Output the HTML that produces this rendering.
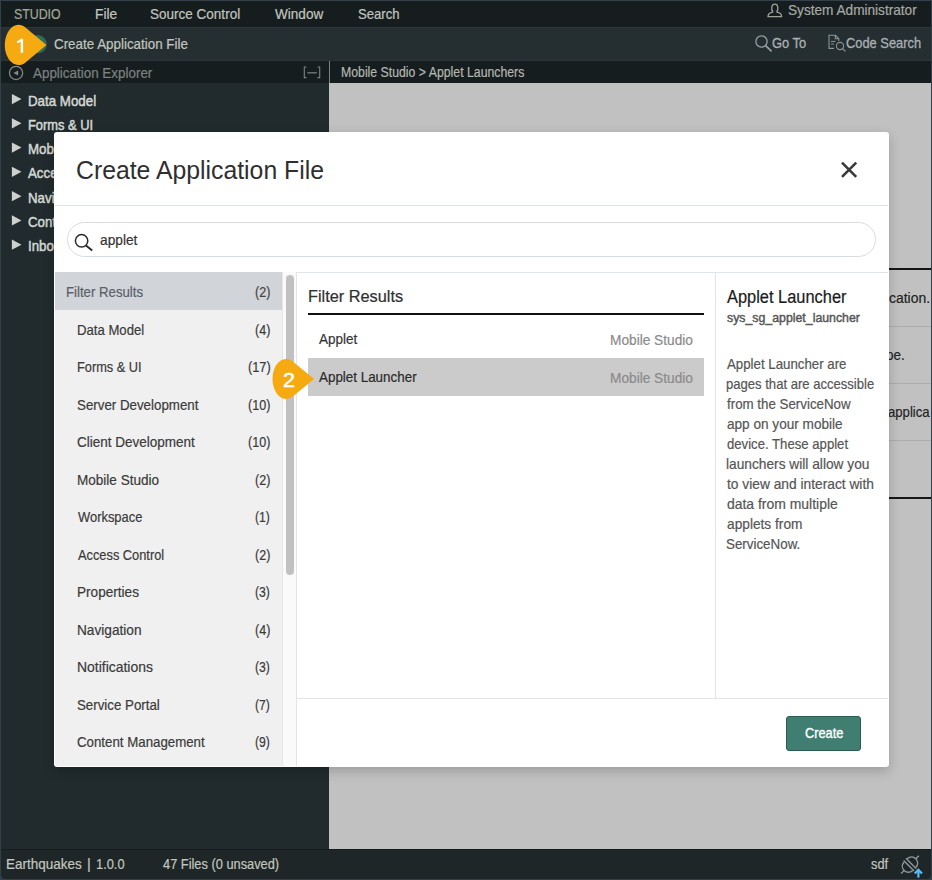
<!DOCTYPE html>
<html><head><meta charset="utf-8">
<style>
*{box-sizing:border-box;margin:0;padding:0}
html,body{width:932px;height:880px;overflow:hidden;background:#33404a;font-family:"Liberation Sans",sans-serif}
.a{position:absolute}
.t{position:absolute;white-space:nowrap;line-height:1;transform-origin:0 0}
svg{position:absolute;left:0;top:0;overflow:visible}
</style></head><body>
<!-- menu bar -->
<div class="a" style="left:1px;top:1px;width:930px;height:26px;background:#161d1f"></div>
<div class="a" style="left:1px;top:27px;width:930px;height:1px;background:#2e363c"></div>
<!-- toolbar -->
<div class="a" style="left:1px;top:28px;width:930px;height:32px;background:#252f31"></div>
<div class="a" style="left:1px;top:60px;width:930px;height:1px;background:#2c3438"></div>
<!-- explorer header + breadcrumb -->
<div class="a" style="left:1px;top:61px;width:930px;height:22px;background:#161d1f"></div>
<!-- sidebar -->
<div class="a" style="left:1px;top:83px;width:328px;height:766px;background:#212b2d"></div>
<div class="a" style="left:329px;top:61px;width:1px;height:22px;background:#7d8385"></div>
<!-- content -->
<div class="a" style="left:329px;top:83px;width:602px;height:766px;background:#c1c1c1"></div>
<div class="a" style="left:330px;top:268px;width:601px;height:2px;background:#151515"></div>
<div class="a" style="left:330px;top:326px;width:601px;height:1px;background:#adadad"></div>
<div class="a" style="left:330px;top:383px;width:601px;height:1px;background:#adadad"></div>
<div class="a" style="left:330px;top:440px;width:601px;height:1px;background:#adadad"></div>
<div class="a" style="left:330px;top:497px;width:601px;height:2px;background:#151515"></div>
<!-- status bar -->
<div class="a" style="left:1px;top:849px;width:930px;height:30px;background:#1e2628;border-bottom-left-radius:4px;border-bottom-right-radius:4px"></div>
<div class="a" style="left:1px;top:849px;width:930px;height:1px;background:#161c1e"></div>

<svg width="932" height="880">
  <!-- user icon -->
  <path d="M772.6,11.2 C771.2,9.6 771.2,4.2 774.8,4.2 C778.4,4.2 778.4,9.6 777,11.2 L777,12.2 C780.2,12.8 781.6,14.4 781.6,16.6 L768,16.6 C768,14.4 769.4,12.8 772.6,12.2 Z" fill="none" stroke="#9ea399" stroke-width="1.3"/>
  <!-- go to search icon -->
  <circle cx="761.5" cy="41.5" r="5.6" fill="none" stroke="#9a9fa0" stroke-width="1.3"/>
  <line x1="765.6" y1="45.6" x2="771.6" y2="51.4" stroke="#9a9fa0" stroke-width="1.7"/>
  <!-- code search icon -->
  <path d="M835.3,35.2 L829,35.2 L829,48.4 L834,48.4 M835.3,35.2 L838.8,38.8 L838.8,41 M835.3,35.2 L835.3,38.8 L838.8,38.8" fill="none" stroke="#8e9394" stroke-width="1.1"/>
  <line x1="831" y1="41.4" x2="835.5" y2="41.4" stroke="#8e9394" stroke-width="1"/>
  <line x1="831" y1="44" x2="834" y2="44" stroke="#8e9394" stroke-width="1"/>
  <circle cx="840" cy="46" r="3.6" fill="none" stroke="#8e9394" stroke-width="1.1"/>
  <line x1="842.6" y1="48.6" x2="845.4" y2="51.4" stroke="#8e9394" stroke-width="1.3"/>
  <!-- green app icon -->
  <circle cx="37.7" cy="44.2" r="9.1" fill="#2f6a5a"/>
  <!-- explorer circle icon -->
  <circle cx="16.05" cy="72.95" r="6.6" fill="none" stroke="#868b88" stroke-width="1.2"/>
  <path d="M13.4,73 L18.2,70.4 L18.2,75.6 Z" fill="#868b88"/>
  <!-- [-] icon -->
  <path d="M306.5,67 L304.3,67 L304.3,77.6 L306.5,77.6 M317.5,67 L319.7,67 L319.7,77.6 L317.5,77.6" fill="none" stroke="#808583" stroke-width="1.1"/>
  <line x1="307.4" y1="72.8" x2="316.8" y2="72.8" stroke="#808583" stroke-width="1.2"/>
  <!-- tree triangles -->
  <g fill="#cdd0cc">
    <path d="M11.9,93.90 L21.5,99.05 L11.9,104.20 Z"/>
    <path d="M11.9,118.17 L21.5,123.32 L11.9,128.47 Z"/>
    <path d="M11.9,142.44 L21.5,147.59 L11.9,152.74 Z"/>
    <path d="M11.9,166.71 L21.5,171.86 L11.9,177.01 Z"/>
    <path d="M11.9,190.98 L21.5,196.13 L11.9,201.28 Z"/>
    <path d="M11.9,215.25 L21.5,220.40 L11.9,225.55 Z"/>
    <path d="M11.9,239.52 L21.5,244.67 L11.9,249.82 Z"/>
  </g>
  <!-- plug icon -->
  <g transform="translate(910,864.6) rotate(-45)" fill="none" stroke="#8f969c" stroke-width="1.35">
    <path d="M2.2,-6 C6,-6 8.2,-3.3 8.2,0 C8.2,3.3 6,6 2.2,6"/>
    <path d="M-2.2,-6 C-6,-6 -8.2,-3.3 -8.2,0 C-8.2,3.3 -6,6 -2.2,6"/>
    <line x1="1.6" y1="-7.4" x2="1.6" y2="7.4"/>
    <line x1="-1.6" y1="-7.4" x2="-1.6" y2="7.4"/>
    <line x1="8.2" y1="0" x2="12.6" y2="0"/>
    <line x1="-8.2" y1="0" x2="-12.6" y2="0"/>
  </g>
  <path d="M914.8,873.6 L918.4,869.9 L922,873.6" fill="none" stroke="#5cb9f6" stroke-width="2.2"/>
  <line x1="918.4" y1="870.5" x2="918.4" y2="877.6" stroke="#5cb9f6" stroke-width="2.2"/>
</svg>
<div class=t style="left:13.77px;top:6.90px;font-size:14.8px;-webkit-text-stroke:0.20px #a3a898;color:#a3a898;transform:scaleX(0.8345)">STUDIO</div>
<div class=t style="left:94.57px;top:6.90px;font-size:14.8px;-webkit-text-stroke:0.20px #c3c6bf;color:#c3c6bf;transform:scaleX(0.9273)">File</div>
<div class=t style="left:150.49px;top:6.90px;font-size:14.8px;-webkit-text-stroke:0.20px #c3c6bf;color:#c3c6bf;transform:scaleX(0.9134)">Source Control</div>
<div class=t style="left:275.20px;top:6.90px;font-size:14.8px;-webkit-text-stroke:0.20px #c3c6bf;color:#c3c6bf;transform:scaleX(0.9170)">Window</div>
<div class=t style="left:358.41px;top:6.90px;font-size:14.8px;-webkit-text-stroke:0.20px #c3c6bf;color:#c3c6bf;transform:scaleX(0.8867)">Search</div>
<div class=t style="left:788.46px;top:2.80px;font-size:14.5px;-webkit-text-stroke:0.20px #a6aaa3;color:#a6aaa3;transform:scaleX(0.9397)">System Administrator</div>
<div class=t style="left:53.66px;top:36.90px;font-size:14.2px;-webkit-text-stroke:0.20px #c3c6bf;color:#c3c6bf;transform:scaleX(0.9433)">Create Application File</div>
<div class=t style="left:772.11px;top:36.00px;font-size:14.5px;-webkit-text-stroke:0.30px #aab0b2;color:#aab0b2;transform:scaleX(0.8892)">Go To</div>
<div class=t style="left:845.81px;top:36.00px;font-size:14.5px;-webkit-text-stroke:0.30px #aab0b2;color:#aab0b2;transform:scaleX(0.8867)">Code Search</div>
<div class=t style="left:32.50px;top:65.70px;font-size:14px;-webkit-text-stroke:0.20px #7b827f;color:#7b827f;transform:scaleX(0.9584)">Application Explorer</div>
<div class=t style="left:340.81px;top:65.50px;font-size:13.8px;-webkit-text-stroke:0.20px #b3b7ae;color:#b3b7ae;transform:scaleX(0.8902)">Mobile Studio &gt; Applet Launchers</div>
<div class=t style="left:27.50px;top:93.50px;font-size:14.8px;-webkit-text-stroke:0.50px #d5d8d4;color:#d5d8d4;transform:scaleX(0.9000)">Data Model</div>
<div class=t style="left:27.53px;top:117.77px;font-size:14.8px;-webkit-text-stroke:0.50px #d5d8d4;color:#d5d8d4;transform:scaleX(0.8712)">Forms &amp; UI</div>
<div class=t style="left:27.50px;top:142.04px;font-size:14.8px;-webkit-text-stroke:0.50px #d5d8d4;color:#d5d8d4;transform:scaleX(0.8992)">Mobile Studio</div>
<div class=t style="left:28.40px;top:166.31px;font-size:14.8px;-webkit-text-stroke:0.50px #d5d8d4;color:#d5d8d4;transform:scaleX(0.8992)">Access Control</div>
<div class=t style="left:27.50px;top:190.58px;font-size:14.8px;-webkit-text-stroke:0.50px #d5d8d4;color:#d5d8d4;transform:scaleX(0.8992)">Navigation</div>
<div class=t style="left:28.40px;top:214.85px;font-size:14.8px;-webkit-text-stroke:0.50px #d5d8d4;color:#d5d8d4;transform:scaleX(0.8992)">Content</div>
<div class=t style="left:27.50px;top:239.12px;font-size:14.8px;-webkit-text-stroke:0.50px #d5d8d4;color:#d5d8d4;transform:scaleX(0.8992)">Inbound Integrations</div>
<div class=t style="left:6.17px;top:857.00px;font-size:14.5px;-webkit-text-stroke:0.20px #c3c6bf;color:#c3c6bf;transform:scaleX(0.9288)">Earthquakes</div>
<div class=t style="left:87.00px;top:857.00px;font-size:14.5px;-webkit-text-stroke:0.20px #c3c6bf;color:#c3c6bf;transform:scaleX(1.0000)">|</div>
<div class=t style="left:96.32px;top:857.00px;font-size:14.5px;-webkit-text-stroke:0.20px #c3c6bf;color:#c3c6bf;transform:scaleX(0.8839)">1.0.0</div>
<div class=t style="left:163.20px;top:857.00px;font-size:14.5px;-webkit-text-stroke:0.20px #c3c6bf;color:#c3c6bf;transform:scaleX(0.8840)">47 Files (0 unsaved)</div>
<div class=t style="left:871.00px;top:856.70px;font-size:14.5px;-webkit-text-stroke:0.20px #c3c6bf;color:#c3c6bf;transform:scaleX(0.8850)">sdf</div>
<div class=t style="left:888.50px;top:290.00px;font-size:15px;-webkit-text-stroke:0.20px #222;color:#222;transform:scaleX(0.9279)">cation.</div>
<div class=t style="left:886.10px;top:347.00px;font-size:15px;-webkit-text-stroke:0.20px #222;color:#222;transform:scaleX(0.8992)">pe.</div>
<div class=t style="left:887.50px;top:404.00px;font-size:15px;-webkit-text-stroke:0.20px #222;color:#222;transform:scaleX(0.8750)">applica</div>

<!-- modal -->
<div class="a" style="left:54px;top:132px;width:835px;height:635px;background:#fff;border:1px solid rgba(255,255,255,.55);border-radius:3px;box-shadow:0 4px 12px rgba(0,0,0,.2);overflow:hidden">
  <div class="a" style="left:0;top:72px;width:833px;height:1px;background:#dfe2e6"></div>
  <div class="a" style="left:12px;top:89px;width:809px;height:35px;border:1px solid #d8dbe0;border-radius:18px"></div>
  <div class="a" style="left:241px;top:139px;width:593px;height:1px;background:#e1e4e8"></div>
  <div class="a" style="left:0;top:139px;width:227px;height:495px;background:#f0f0f0"></div>
  <div class="a" style="left:0;top:139px;width:227px;height:38px;background:#d1d4d8"></div>
  <div class="a" style="left:227px;top:139px;width:14px;height:495px;background:#fafafa;border-left:1px solid #e6e6e6"></div>
  <div class="a" style="left:231px;top:142px;width:8px;height:300px;background:#c1c1c1;border-radius:4px"></div>
  <div class="a" style="left:241px;top:139px;width:1px;height:495px;background:#e1e4e8"></div>
  <div class="a" style="left:660px;top:139px;width:1px;height:427px;background:#e1e4e8"></div>
  <div class="a" style="left:241px;top:565px;width:593px;height:1px;background:#e1e4e8"></div>
  <div class="a" style="left:253px;top:179.5px;width:396px;height:2.5px;background:#111"></div>
  <div class="a" style="left:253px;top:225px;width:396px;height:38px;background:#cbcbcb"></div>
  <div class="a" style="left:731px;top:583px;width:75px;height:35px;background:#3f7e70;border:1px solid #2a5c51;border-radius:3px"></div>
</div>
<svg width="932" height="880">
  <!-- close X -->
  <path d="M842,162.6 L856.2,176.8 M856.2,162.6 L842,176.8" stroke="#393939" stroke-width="2.6"/>
  <!-- search icon -->
  <circle cx="81.6" cy="240.8" r="6.2" fill="none" stroke="#2a2a2a" stroke-width="1.5"/>
  <line x1="86" y1="245.4" x2="92.2" y2="250.6" stroke="#2a2a2a" stroke-width="1.9"/>
  <!-- badges -->
  <g fill="#f6aa12">
    <path d="M46.40,44.95 L25.45,27.50 A13.8,20.1 0 1,0 25.45,62.40 Z"/>
    <path d="M314.10,378.90 L292.71,361.42 A13.6,20 0 1,0 292.71,396.38 Z"/>
  </g>
</svg>
<svg width="932" height="880"><path d="M21.9,38.8 L21.9,52.8" stroke="#fff" stroke-width="2.4"/><path d="M21.6,39.4 C20.6,41 19.2,41.8 17,42.2" fill="none" stroke="#fff" stroke-width="2"/></svg>
<div class="t" style="left:282.6px;top:370px;font-size:20px;color:#fff;-webkit-text-stroke:.5px #fff;transform:scaleX(1.08)">2</div>
<div class=t style="left:76.44px;top:158.00px;font-size:25.8px;color:#2f2f2f;transform:scaleX(0.9609)">Create Application File</div>
<div class=t style="left:99.50px;top:232.50px;font-size:14.8px;-webkit-text-stroke:0.20px #333;color:#333;transform:scaleX(0.9268)">applet</div>
<div class=t style="left:65.71px;top:284.70px;font-size:14.8px;-webkit-text-stroke:0.20px #59606a;color:#59606a;transform:scaleX(0.8929)">Filter Results</div>
<div class=t style="left:254.95px;top:284.70px;font-size:14.8px;-webkit-text-stroke:0.20px #444;color:#444;transform:scaleX(0.8471)">(2)</div>
<div class=t style="left:77.31px;top:322.70px;font-size:14.8px;-webkit-text-stroke:0.20px #3a3a3a;color:#3a3a3a;transform:scaleX(0.8878)">Data Model</div>
<div class=t style="left:254.95px;top:322.70px;font-size:14.8px;-webkit-text-stroke:0.20px #3a3a3a;color:#3a3a3a;transform:scaleX(0.8471)">(4)</div>
<div class=t style="left:77.34px;top:360.22px;font-size:14.8px;-webkit-text-stroke:0.20px #3a3a3a;color:#3a3a3a;transform:scaleX(0.8630)">Forms &amp; UI</div>
<div class=t style="left:247.74px;top:360.22px;font-size:14.8px;-webkit-text-stroke:0.20px #3a3a3a;color:#3a3a3a;transform:scaleX(0.8640)">(17)</div>
<div class=t style="left:77.30px;top:397.74px;font-size:14.8px;-webkit-text-stroke:0.20px #3a3a3a;color:#3a3a3a;transform:scaleX(0.9000)">Server Development</div>
<div class=t style="left:248.15px;top:397.74px;font-size:14.8px;-webkit-text-stroke:0.20px #3a3a3a;color:#3a3a3a;transform:scaleX(0.8480)">(10)</div>
<div class=t style="left:77.29px;top:435.26px;font-size:14.8px;-webkit-text-stroke:0.20px #3a3a3a;color:#3a3a3a;transform:scaleX(0.9125)">Client Development</div>
<div class=t style="left:248.15px;top:435.26px;font-size:14.8px;-webkit-text-stroke:0.20px #3a3a3a;color:#3a3a3a;transform:scaleX(0.8480)">(10)</div>
<div class=t style="left:77.29px;top:472.78px;font-size:14.8px;-webkit-text-stroke:0.20px #3a3a3a;color:#3a3a3a;transform:scaleX(0.9148)">Mobile Studio</div>
<div class=t style="left:254.95px;top:472.78px;font-size:14.8px;-webkit-text-stroke:0.20px #3a3a3a;color:#3a3a3a;transform:scaleX(0.8471)">(2)</div>
<div class=t style="left:78.20px;top:510.30px;font-size:14.8px;-webkit-text-stroke:0.20px #3a3a3a;color:#3a3a3a;transform:scaleX(0.8726)">Workspace</div>
<div class=t style="left:255.38px;top:510.30px;font-size:14.8px;-webkit-text-stroke:0.20px #3a3a3a;color:#3a3a3a;transform:scaleX(0.8235)">(1)</div>
<div class=t style="left:78.20px;top:547.82px;font-size:14.8px;-webkit-text-stroke:0.20px #3a3a3a;color:#3a3a3a;transform:scaleX(0.8657)">Access Control</div>
<div class=t style="left:254.95px;top:547.82px;font-size:14.8px;-webkit-text-stroke:0.20px #3a3a3a;color:#3a3a3a;transform:scaleX(0.8471)">(2)</div>
<div class=t style="left:77.28px;top:585.34px;font-size:14.8px;-webkit-text-stroke:0.20px #3a3a3a;color:#3a3a3a;transform:scaleX(0.9182)">Properties</div>
<div class=t style="left:255.38px;top:585.34px;font-size:14.8px;-webkit-text-stroke:0.20px #3a3a3a;color:#3a3a3a;transform:scaleX(0.8235)">(3)</div>
<div class=t style="left:77.28px;top:622.86px;font-size:14.8px;-webkit-text-stroke:0.20px #3a3a3a;color:#3a3a3a;transform:scaleX(0.9235)">Navigation</div>
<div class=t style="left:254.95px;top:622.86px;font-size:14.8px;-webkit-text-stroke:0.20px #3a3a3a;color:#3a3a3a;transform:scaleX(0.8471)">(4)</div>
<div class=t style="left:77.26px;top:660.38px;font-size:14.8px;-webkit-text-stroke:0.20px #3a3a3a;color:#3a3a3a;transform:scaleX(0.9418)">Notifications</div>
<div class=t style="left:255.38px;top:660.38px;font-size:14.8px;-webkit-text-stroke:0.20px #3a3a3a;color:#3a3a3a;transform:scaleX(0.8235)">(3)</div>
<div class=t style="left:77.30px;top:697.90px;font-size:14.8px;-webkit-text-stroke:0.20px #3a3a3a;color:#3a3a3a;transform:scaleX(0.8989)">Service Portal</div>
<div class=t style="left:255.38px;top:697.90px;font-size:14.8px;-webkit-text-stroke:0.20px #3a3a3a;color:#3a3a3a;transform:scaleX(0.8235)">(7)</div>
<div class=t style="left:77.30px;top:735.42px;font-size:14.8px;-webkit-text-stroke:0.20px #3a3a3a;color:#3a3a3a;transform:scaleX(0.8972)">Content Management</div>
<div class=t style="left:255.38px;top:735.42px;font-size:14.8px;-webkit-text-stroke:0.20px #3a3a3a;color:#3a3a3a;transform:scaleX(0.8235)">(9)</div>
<div class=t style="left:307.51px;top:287.50px;font-size:16.4px;-webkit-text-stroke:0.20px #2f2f2f;color:#2f2f2f;transform:scaleX(0.9947)">Filter Results</div>
<div class=t style="left:318.80px;top:331.90px;font-size:14.8px;-webkit-text-stroke:0.20px #333;color:#333;transform:scaleX(0.9119)">Applet</div>
<div class=t style="left:609.98px;top:332.50px;font-size:14.8px;-webkit-text-stroke:0.20px #8a8a8a;color:#8a8a8a;transform:scaleX(0.9250)">Mobile Studio</div>
<div class=t style="left:318.80px;top:370.20px;font-size:14.8px;-webkit-text-stroke:0.20px #2a2a2a;color:#2a2a2a;transform:scaleX(0.9056)">Applet Launcher</div>
<div class=t style="left:609.98px;top:370.50px;font-size:14.8px;-webkit-text-stroke:0.20px #8a8a8a;color:#8a8a8a;transform:scaleX(0.9250)">Mobile Studio</div>
<div class=t style="left:726.80px;top:288.50px;font-size:17.5px;-webkit-text-stroke:0.20px #1a1a1a;color:#1a1a1a;transform:scaleX(0.9375)">Applet Launcher</div>
<div class=t style="left:727.00px;top:311.30px;font-size:13.2px;-webkit-text-stroke:0.45px #555;color:#555;transform:scaleX(0.9345)">sys_sg_applet_launcher</div>
<div class=t style="left:727.00px;top:357.30px;font-size:14.5px;-webkit-text-stroke:0.20px #555;color:#555;transform:scaleX(0.9146)">Applet Launcher are</div>
<div class=t style="left:726.10px;top:377.23px;font-size:14.5px;-webkit-text-stroke:0.20px #555;color:#555;transform:scaleX(0.9012)">pages that are accessible</div>
<div class=t style="left:727.00px;top:397.16px;font-size:14.5px;-webkit-text-stroke:0.20px #555;color:#555;transform:scaleX(0.9185)">from the ServiceNow</div>
<div class=t style="left:727.00px;top:417.09px;font-size:14.5px;-webkit-text-stroke:0.20px #555;color:#555;transform:scaleX(0.9374)">app on your mobile</div>
<div class=t style="left:727.00px;top:437.02px;font-size:14.5px;-webkit-text-stroke:0.20px #555;color:#555;transform:scaleX(0.9067)">device. These applet</div>
<div class=t style="left:726.05px;top:456.95px;font-size:14.5px;-webkit-text-stroke:0.20px #555;color:#555;transform:scaleX(0.9467)">launchers will allow you</div>
<div class=t style="left:727.00px;top:476.88px;font-size:14.5px;-webkit-text-stroke:0.20px #555;color:#555;transform:scaleX(0.9494)">to view and interact with</div>
<div class=t style="left:727.00px;top:496.81px;font-size:14.5px;-webkit-text-stroke:0.20px #555;color:#555;transform:scaleX(0.9609)">data from multiple</div>
<div class=t style="left:727.00px;top:516.74px;font-size:14.5px;-webkit-text-stroke:0.20px #555;color:#555;transform:scaleX(0.9456)">applets from</div>
<div class=t style="left:726.08px;top:536.67px;font-size:14.5px;-webkit-text-stroke:0.20px #555;color:#555;transform:scaleX(0.9215)">ServiceNow.</div>
<div class=t style="left:804.60px;top:726.10px;font-size:14.5px;-webkit-text-stroke:0.35px #fff;color:#fff;transform:scaleX(0.8814)">Create</div>
</body></html>
